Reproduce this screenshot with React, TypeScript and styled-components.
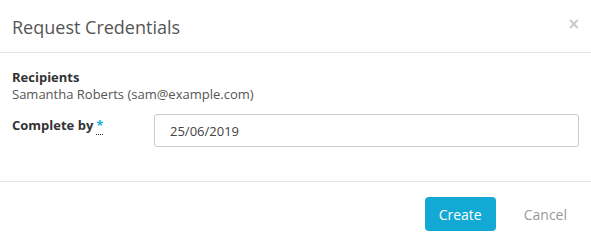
import React from 'react'
import styled, { createGlobalStyle } from 'styled-components'

const GlobalStyle = createGlobalStyle`
  html, body {
    margin: 0;
    padding: 0;
    background: #fff;
  }
  body {
    font-family: 'Open Sans', 'Liberation Sans', Arial, sans-serif;
    -webkit-font-smoothing: antialiased;
  }
`

const Modal = styled.div`
  width: 591px;
  background: #fff;
  color: #555;
`

const Header = styled.div`
  display: flex;
  align-items: center;
  justify-content: space-between;
  height: 53px;
  padding: 0 12px;
  border-bottom: 1px solid #e5e5e5;
  box-sizing: border-box;
`

const Title = styled.h2`
  margin: 0;
  padding-top: 1px;
  font-size: 18px;
  font-weight: 400;
  color: #555;
`

const CloseButton = styled.button`
  border: 0;
  background: none;
  padding: 0;
  margin-right: -1px;
  margin-top: -4px;
  color: #c8c8c8;
  font-size: 15px;
  font-weight: 700;
  line-height: 1;
  font-family: 'DejaVu Sans', sans-serif;
  cursor: pointer;
`

const Body = styled.div`
  padding: 16px 12px 34px;
  border-bottom: 1px solid #e5e5e5;
`

const Label = styled.div`
  font-size: 13px;
  font-weight: 700;
  color: #333;
  line-height: 17px;
`

const Value = styled.div`
  font-size: 13px;
  line-height: 17px;
  color: #555;
`

const FieldRow = styled.div`
  display: grid;
  grid-template-columns: 142px 1fr;
  align-items: start;
  margin-top: 11px;
`

const FieldLabel = styled(Label)`
  padding-top: 3px;
`

const Required = styled.abbr`
  color: #1aaee0;
  text-decoration: none;
  border-bottom: 1px dotted #333;
  margin-left: 3px;
  cursor: help;
`

const DateInput = styled.input`
  height: 33px;
  box-sizing: border-box;
  border: 1px solid #ccc;
  border-radius: 3px;
  padding: 0 15px;
  font-family: inherit;
  font-size: 13px;
  color: #444;
  outline: none;
`

const Footer = styled.div`
  display: flex;
  justify-content: flex-end;
  align-items: center;
  gap: 16px;
  padding: 15px 12px;
`

const Button = styled.button<{ $primary?: boolean }>`
  height: 34px;
  padding: 0 ${(p) => (p.$primary ? '14px' : '12px')};
  border: 0;
  border-radius: 4px;
  font-family: inherit;
  font-size: 14px;
  cursor: pointer;
  background: ${(p) => (p.$primary ? '#12a9d5' : 'transparent')};
  color: ${(p) => (p.$primary ? '#fff' : '#999')};
`

export default function App() {
  return (
    <>
      <GlobalStyle />
      <Modal>
        <Header>
          <Title>Request Credentials</Title>
          <CloseButton aria-label="Close">×</CloseButton>
        </Header>
        <Body>
          <Label>Recipients</Label>
          <Value>Samantha Roberts (sam@example.com)</Value>
          <FieldRow>
            <FieldLabel>
              Complete by<Required title="required">*</Required>
            </FieldLabel>
            <DateInput defaultValue="25/06/2019" />
          </FieldRow>
        </Body>
        <Footer>
          <Button $primary>Create</Button>
          <Button>Cancel</Button>
        </Footer>
      </Modal>
    </>
  )
}
